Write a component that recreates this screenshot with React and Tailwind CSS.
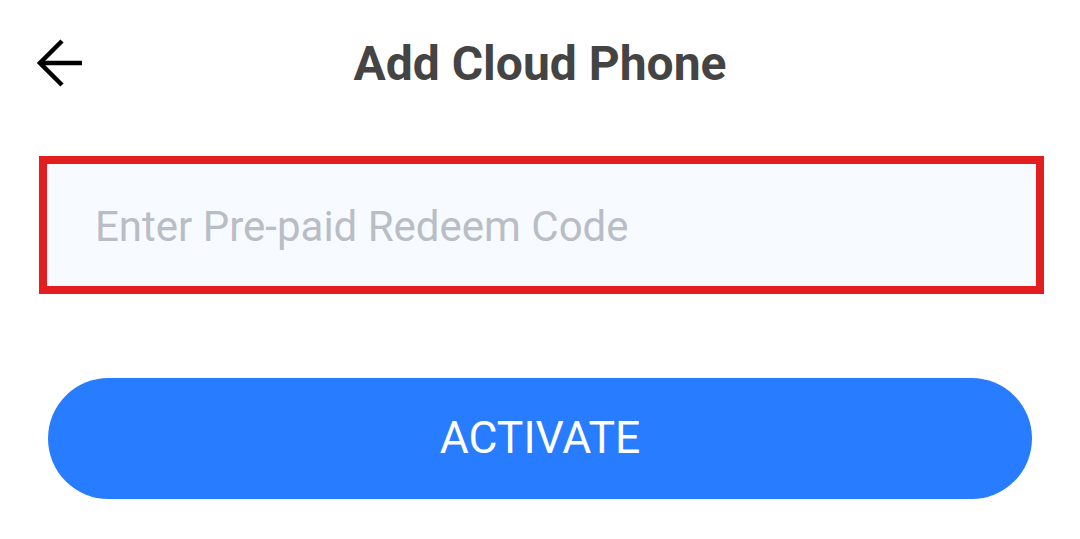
import React from 'react'

const BackArrow = () => (
  <svg width="48" height="48" viewBox="0 0 48 48" fill="none" stroke="#000" strokeWidth="4.5">
    <path d="M4 24H46" />
    <path d="M26 2L4 24L26 46" />
  </svg>
)

const App = () => {
  return (
    <div className="w-[1080px] h-[539px] bg-white flex flex-col font-['Roboto','Liberation_Sans',sans-serif]">
      <div className="h-[124px] grid grid-cols-[1fr_auto_1fr] items-center">
        <button className="pl-[36px] pt-[1px] flex items-center">
          <BackArrow />
        </button>
        <h1 className="text-[48px] font-bold text-[#444444] leading-none pt-[4px]">Add Cloud Phone</h1>
        <div />
      </div>
      <div className="mt-[32px] ml-[39px] w-[1005px] h-[138px] border-8 border-[#e41e1e] bg-[#f7faff] flex items-center pl-[48px]">
        <input
          className="w-full bg-transparent outline-none text-[42px] text-[#1f1f1f] placeholder:text-[#b9bdc6] pt-[2px]"
          placeholder="Enter Pre-paid Redeem Code"
        />
      </div>
      <button className="mt-[84px] ml-[48px] w-[984px] h-[121px] rounded-full bg-[#277cff] text-white text-[44.5px] leading-none">
        ACTIVATE
      </button>
    </div>
  )
}

export default App
